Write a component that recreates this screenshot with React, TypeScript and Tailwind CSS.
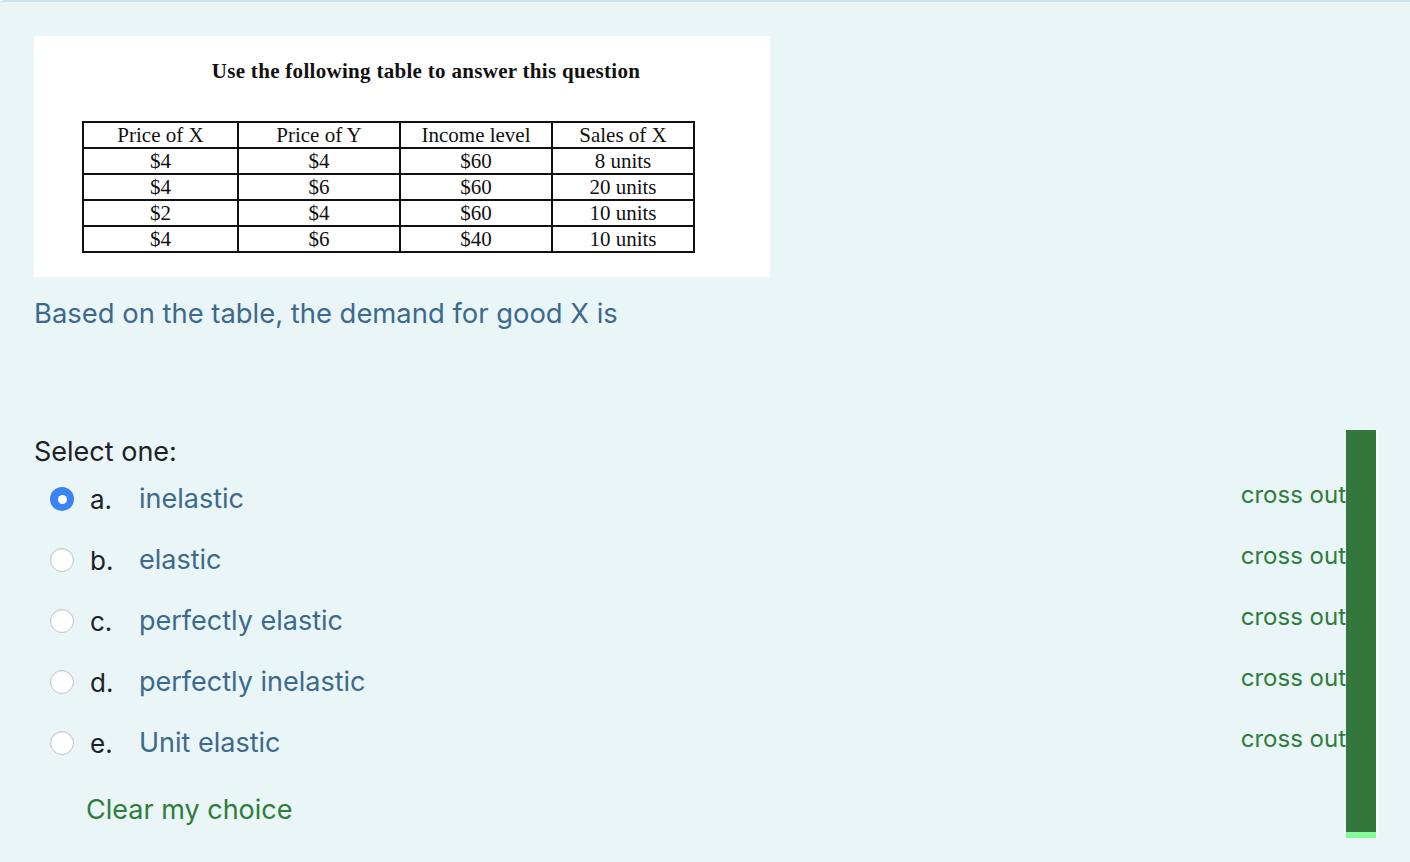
const font = { fontFamily: "Inter, 'Noto Sans', sans-serif" };

const rows = [
  ["$4", "$4", "$60", "8 units"],
  ["$4", "$6", "$60", "20 units"],
  ["$2", "$4", "$60", "10 units"],
  ["$4", "$6", "$40", "10 units"],
];

const options = [
  { letter: "a.", text: "inelastic", checked: true },
  { letter: "b.", text: "elastic" },
  { letter: "c.", text: "perfectly elastic" },
  { letter: "d.", text: "perfectly inelastic" },
  { letter: "e.", text: "Unit elastic" },
];

function Radio({ checked }: { checked?: boolean }) {
  if (checked) {
    return (
      <span className="flex h-[24px] w-[24px] items-center justify-center rounded-full bg-[#3b82f6]">
        <span className="h-[9px] w-[9px] rounded-full bg-white" />
      </span>
    );
  }
  return (
    <span className="h-[24px] w-[24px] rounded-full border border-[#c4c4c4] bg-white shadow-[inset_0_1px_2px_rgba(0,0,0,0.08)]" />
  );
}

function TableImage() {
  return (
    <div
      className="flex h-[241px] w-[736px] flex-col bg-white"
      style={{ fontFamily: "'Liberation Serif', serif" }}
    >
      <div className="mt-[22px] pl-[48px] text-center text-[21px] font-bold leading-[26px] tracking-[0.3px] text-[#111]">
        Use the following table to answer this question
      </div>
      <table className="ml-[48px] mt-[37px] w-[613px] border-collapse text-[21px] leading-none text-[#111]">
        <thead>
          <tr className="h-[26px]">
            <th className="w-[155px] border-2 border-[#111] font-normal">Price of X</th>
            <th className="w-[162px] border-2 border-[#111] font-normal">Price of Y</th>
            <th className="w-[152px] border-2 border-[#111] font-normal">Income level</th>
            <th className="border-2 border-[#111] font-normal">Sales of X</th>
          </tr>
        </thead>
        <tbody>
          {rows.map((r, i) => (
            <tr key={i} className="h-[26px]">
              {r.map((c, j) => (
                <td key={j} className="border-2 border-[#111] text-center">
                  {c}
                </td>
              ))}
            </tr>
          ))}
        </tbody>
      </table>
    </div>
  );
}

export default function App() {
  return (
    <div
      className="h-[862px] w-full overflow-hidden rounded-tl-[4px] border-t-2 border-[#c9e4ec] bg-[#eaf5f8] pl-[34px] pt-[34px]"
      style={font}
    >
      <TableImage />
      <p className="mt-[18px] text-[27.4px] leading-[36px] text-[#3b6a8c]">
        Based on the table, the demand for good X is
      </p>

      <div className="mt-[99px] flex">
        <div className="flex-1">
          <div className="mt-[7px] text-[27px] leading-[30px] text-[#1d2125]">Select one:</div>
          <div className="mt-[14px] flex flex-col">
            {options.map((o) => (
              <div key={o.letter} className="flex h-[61px] items-start justify-between">
                <div className="flex h-[36px] items-center">
                  <span className="ml-[16px] flex w-[24px] justify-center">
                    <Radio checked={o.checked} />
                  </span>
                  <span className="ml-[16px] w-[49px] text-[26px] text-[#1d2125]">{o.letter}</span>
                  <span className="text-[27px] text-[#3b6a8c]">{o.text}</span>
                </div>
                <span className="text-[24px] leading-[28px] text-[#2e7d3a]">cross out</span>
              </div>
            ))}
          </div>
          <div className="ml-[52px] mt-[4px] text-[27px] text-[#2e7d3a]">Clear my choice</div>
        </div>
        <div className="mr-[32px] flex h-[408px] w-[32px] flex-col border-r-2 border-white">
          <div className="flex-1 bg-[#34773b]" />
          <div className="h-[6px] bg-[#86f99a]" />
        </div>
      </div>
    </div>
  );
}
